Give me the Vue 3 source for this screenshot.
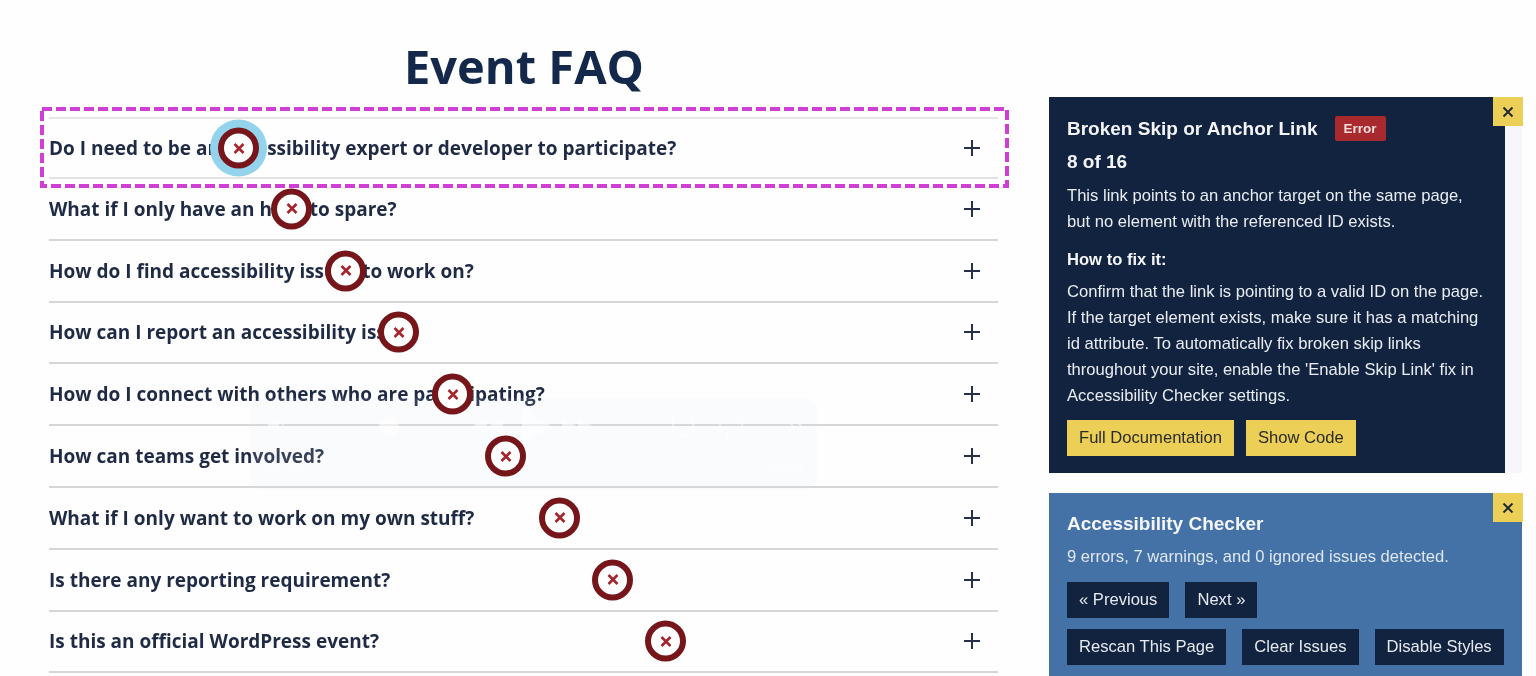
<template>
  <div class="page">
    <section class="faq">
      <h1 class="faq-title">Event FAQ</h1>
      <div class="faq-list">
        <div
          v-for="(item, idx) in questions"
          :key="idx"
          class="faq-row"
          :class="{ flagged: idx === 0 }"
        >
          <span class="faq-q">{{ item.q }}</span>
          <svg class="plus" viewBox="0 0 18 18" width="18" height="18">
            <path d="M9 1v16M1 9h16" stroke="#26304a" stroke-width="2" fill="none"/>
          </svg>
          <button
            class="marker"
            :class="{ current: idx === 0 }"
            :style="{ left: item.x + 'px' }"
            aria-label="error"
          >
            <svg viewBox="0 0 14 14" width="14" height="14">
              <path d="M2.5 2.5l9 9M11.5 2.5l-9 9" stroke="#a5252c" stroke-width="2.6" fill="none"/>
            </svg>
          </button>
        </div>
      </div>

      <!-- highlight round the flagged row -->
      <svg class="highlight" width="970" height="82" viewBox="0 0 970 82">
        <rect x="2" y="2" width="965" height="77" fill="none" stroke="#d03fd4" stroke-width="4" stroke-dasharray="10 4"/>
      </svg>

      <!-- video controls fading out over the page -->
      <div class="video-bar">
        <div class="video-icons">
          <svg class="v-speaker" viewBox="0 0 24 24" width="24" height="24">
            <path d="M3 9h5l6-5v16l-6-5H3zM17 8q3 4 0 8" fill="#fff"/>
          </svg>
          <span class="v-dot"></span>
          <svg class="v-rew" viewBox="0 0 32 24" width="32" height="24"><path d="M15 3v18L1 12zM31 3v18L17 12z" fill="#fff"/></svg>
          <svg class="v-play" viewBox="0 0 32 40" width="32" height="40"><path d="M2 1l29 19L2 39z" fill="#fff"/></svg>
          <svg class="v-fwd" viewBox="0 0 32 24" width="32" height="24"><path d="M1 3v18l14-9zM17 3v18l14-9z" fill="#fff"/></svg>
          <svg class="v-air" viewBox="0 0 24 24" width="24" height="24">
            <path d="M5 17H2V3h20v14h-3" stroke="#fff" stroke-width="1.6" fill="none"/><path d="M12 14l6 8H6z" fill="#fff"/>
          </svg>
          <svg class="v-chat" viewBox="0 0 26 26" width="26" height="26">
            <path d="M2 3h22v15H13l-4 5v-5H2z" stroke="#fff" stroke-width="1.6" fill="none"/>
          </svg>
          <svg class="v-more" viewBox="0 0 20 20" width="20" height="20">
            <path d="M2 2l8 8-8 8M10 2l8 8-8 8" stroke="#fff" stroke-width="1.6" fill="none"/>
          </svg>
        </div>
        <div class="video-track">
          <span class="v-time">02:13</span>
          <div class="v-line"><i></i></div>
          <span class="v-time">26:48</span>
        </div>
      </div>
    </section>

    <aside class="side">
      <div class="panel-wrap">
        <div class="panel issue">
          <div class="issue-head">
            <h2>Broken Skip or Anchor Link</h2>
            <span class="badge">Error</span>
          </div>
          <div class="count">8 of 16</div>
          <p>This link points to an anchor target on the same page,<br />but no element with the referenced ID exists.</p>
          <h3>How to fix it:</h3>
          <p>Confirm that the link is pointing to a valid ID on the page.<br />If the target element exists, make sure it has a matching<br />id attribute. To automatically fix broken skip links<br />throughout your site, enable the 'Enable Skip Link' fix in<br />Accessibility Checker settings.</p>
          <div class="btns">
            <button class="btn yellow">Full Documentation</button>
            <button class="btn yellow">Show Code</button>
          </div>
        </div>
        <button class="close" aria-label="close">
          <svg viewBox="0 0 12 12" width="12" height="12">
            <path d="M1.5 1.5l9 9M10.5 1.5l-9 9" stroke="#1a2436" stroke-width="1.8" fill="none"/>
          </svg>
        </button>
      </div>

      <div class="panel checker">
        <h2>Accessibility Checker</h2>
        <p class="summary">9 errors, 7 warnings, and 0 ignored issues detected.</p>
        <div class="btns nav">
          <button class="btn navy">« Previous</button>
          <button class="btn navy">Next »</button>
        </div>
        <div class="btns tools">
          <button class="btn navy">Rescan This Page</button>
          <button class="btn navy">Clear Issues</button>
          <button class="btn navy">Disable Styles</button>
        </div>
        <button class="close" aria-label="close">
          <svg viewBox="0 0 12 12" width="12" height="12">
            <path d="M1.5 1.5l9 9M10.5 1.5l-9 9" stroke="#1a2436" stroke-width="1.8" fill="none"/>
          </svg>
        </button>
      </div>
    </aside>
  </div>
</template>

<script setup>
// x = where the error marker sits inside its row
const questions = [
  { q: 'Do I need to be an accessibility expert or developer to participate?', x: 169 },
  { q: 'What if I only have an hour to spare?', x: 222 },
  { q: 'How do I find accessibility issues to work on?', x: 276 },
  { q: 'How can I report an accessibility issue?', x: 329 },
  { q: 'How do I connect with others who are participating?', x: 383 },
  { q: 'How can teams get involved?', x: 436 },
  { q: 'What if I only want to work on my own stuff?', x: 490 },
  { q: 'Is there any reporting requirement?', x: 543 },
  { q: 'Is this an official WordPress event?', x: 596 }
]
</script>

<style>
html, body {
  margin: 0;
  background: #fefefe;
  overflow: hidden;
}
</style>

<style scoped>
.page {
  display: flex;
  align-items: flex-start;
  height: 676px;
  overflow: hidden;
  padding-left: 49px;
  box-sizing: border-box;
  background: #fefefe;
  filter: blur(0.45px);
}

/* FAQ */
.faq {
  position: relative;
  flex: 0 0 949px;
}
.faq-title {
  margin: 0;
  height: 117px;
  padding: 35px 0 0 1px;
  box-sizing: border-box;
  text-align: center;
  font: 700 47px/62px "Open Sans", sans-serif;
  color: #13284a;
}
.faq-list {
  border-top: 2px solid #e6e6e6;
}
.faq-row {
  position: relative;
  display: flex;
  align-items: center;
  justify-content: space-between;
  height: 61.8px;
  box-sizing: border-box;
  border-bottom: 2px solid #d6d6d6;
}
.faq-row.flagged {
  height: 60px;
  border-bottom-color: #e3e3e3;
}
.faq-q {
  font: 700 19px/26px "Open Sans", sans-serif;
  color: #1f2a44;
}
.plus {
  margin-right: 17px;
}
.highlight {
  position: absolute;
  left: -9px;
  top: 107px;
  pointer-events: none;
}

.marker {
  position: absolute;
  z-index: 2;
  top: 50%;
  transform: translateY(-50%);
  width: 41px;
  height: 41px;
  padding: 0;
  display: flex;
  align-items: center;
  justify-content: center;
  box-sizing: border-box;
  border: 6px solid #76161b;
  border-radius: 50%;
  background: #fff;
}
.marker.current {
  box-shadow: 0 0 0 8px #93d3ec;
}

/* faded player controls */
.video-bar {
  position: absolute;
  left: 201px;
  top: 398px;
  width: 567px;
  height: 92px;
  border-radius: 14px;
  background: rgba(222, 233, 248, 0.12);
  pointer-events: none;
}
.video-icons {
  position: relative;
  height: 60px;
}
.video-icons svg, .v-dot {
  position: absolute;
  opacity: 0.55;
}
.v-speaker { left: 15px; top: 15px; }
.v-dot { left: 129px; top: 19px; width: 20px; height: 20px; border-radius: 50%; background: #fff; }
.v-rew { left: 222px; top: 16px; }
.v-play { left: 270px; top: 8px; }
.v-fwd { left: 311px; top: 16px; }
.v-air { left: 421px; top: 17px; }
.v-chat { left: 468px; top: 17px; }
.v-more { left: 534px; top: 19px; }
.video-track {
  display: flex;
  align-items: center;
  gap: 18px;
  padding: 0 13px;
  font: 700 15px/20px "Liberation Sans", sans-serif;
  color: #fff;
  opacity: 0.45;
}
.v-line {
  position: relative;
  flex: 1;
  height: 2px;
  background: #fff;
}
.v-line i {
  position: absolute;
  left: 45px;
  top: -10px;
  width: 2px;
  height: 22px;
  background: #fff;
}

/* checker panels */
.side {
  flex: 0 0 473px;
  margin-left: 51px;
  padding-top: 97px;
  display: flex;
  flex-direction: column;
  gap: 20px;
  font-family: "Liberation Sans", Arial, sans-serif;
}
.panel-wrap {
  position: relative;
  background: #f6f7fb;
}
.panel {
  box-sizing: border-box;
  color: #e9edf3;
}
.panel h2 {
  margin: 0;
  font-size: 19px;
  line-height: 24px;
  font-weight: 700;
  color: #f3f5f8;
}
.panel p {
  margin: 0;
  font-size: 16.6px;
  line-height: 26px;
}
.issue {
  width: 456px;
  height: 376px;
  padding: 19px 18px 0;
  background: #12233f;
}
.issue-head {
  display: flex;
  align-items: center;
  gap: 17px;
}
.badge {
  padding: 0 9px;
  font-size: 13.5px;
  line-height: 25px;
  font-weight: 700;
  color: #f1dcdc;
  background: #a92a2e;
  border-radius: 2px;
}
.count {
  margin: 10px 0 10px;
  font-size: 19px;
  line-height: 22px;
  font-weight: 700;
  color: #f3f5f8;
}
.issue h3 {
  margin: 15px 0 9px;
  font-size: 16.6px;
  line-height: 20px;
  font-weight: 700;
  color: #f3f5f8;
}
.btns {
  display: flex;
}
.issue .btns {
  gap: 12px;
  margin-top: 11px;
}
.btn {
  height: 36px;
  padding: 0 12px;
  border: 0;
  border-radius: 0;
  font: 16.6px/36px "Liberation Sans", Arial, sans-serif;
  white-space: nowrap;
}
.btn.yellow {
  background: #ebcf57;
  color: #2a2a2a;
}
.btn.navy {
  background: #12233f;
  color: #e6eaf0;
}
.close {
  position: absolute;
  top: 0;
  right: -1px;
  width: 30px;
  height: 29px;
  padding: 0;
  display: flex;
  align-items: center;
  justify-content: center;
  border: 0;
  background: #ebcf57;
}
.checker {
  position: relative;
  height: 220px;
  padding: 19px 18px 0;
  background: #4472a6;
}
.summary {
  margin-top: 8px !important;
  color: #dfe7f1;
}
.nav {
  gap: 16px;
  margin-top: 12px;
}
.tools {
  gap: 16px;
  margin-top: 11px;
}
</style>
